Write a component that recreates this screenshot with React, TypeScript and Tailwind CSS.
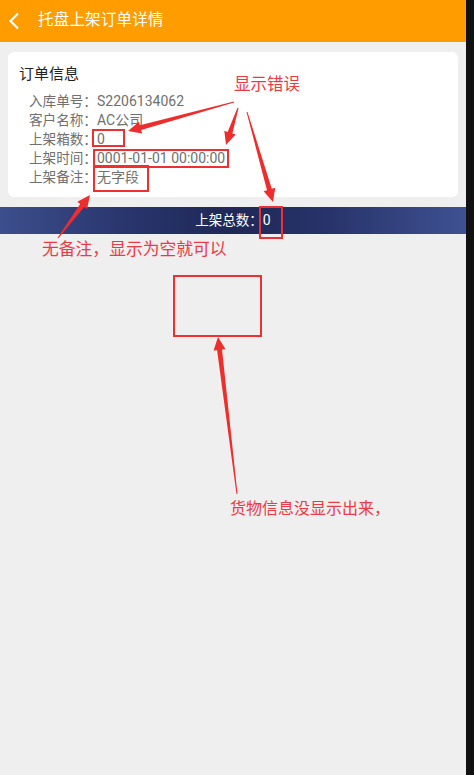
import React from "react";

type Pt = [number, number];

// tapered annotation arrow, thin at the tail and wide near the head
function arrowPoints(tail: Pt, tip: Pt, headLen = 13, headW = 12, w0 = 1, w1 = 5) {
  const [x1, y1] = tail;
  const [x2, y2] = tip;
  const L = Math.hypot(x2 - x1, y2 - y1);
  const dx = (x2 - x1) / L;
  const dy = (y2 - y1) / L;
  const nx = -dy;
  const ny = dx;
  const bx = x2 - dx * headLen;
  const by = y2 - dy * headLen;
  const p = (x: number, y: number, w: number) => `${(x + nx * w).toFixed(1)},${(y + ny * w).toFixed(1)}`;
  return [
    p(x1, y1, w0 / 2),
    p(bx, by, w1 / 2),
    p(bx, by, headW / 2),
    `${x2},${y2}`,
    p(bx, by, -headW / 2),
    p(bx, by, -w1 / 2),
    p(x1, y1, -w0 / 2),
  ].join(" ");
}

const arrows: [Pt, Pt][] = [
  [[234, 102], [128, 131]],
  [[238, 108], [226, 145]],
  [[247, 112], [273, 202]],
  [[58, 238], [90, 195]],
  [[237, 494], [218, 337]],
];

const boxes = [
  { x: 93, y: 130, w: 31, h: 16 },
  { x: 94, y: 150, w: 134, h: 17 },
  { x: 94, y: 166, w: 54, h: 25 },
  { x: 260, y: 207, w: 22, h: 31 },
  { x: 174, y: 276, w: 87, h: 60 },
];

const rows = [
  { label: "入库单号：", value: "S2206134062" },
  { label: "客户名称：", value: "AC公司" },
  { label: "上架箱数：", value: "0" },
  { label: "上架时间：", value: "0001-01-01 00:00:00" },
  { label: "上架备注：", value: "无字段" },
];

export default function App() {
  return (
    <div
      className="relative flex h-[775px] w-[474px] overflow-hidden"
      style={{ fontFamily: 'Roboto, "Noto Sans CJK SC", sans-serif' }}
    >
      <div className="flex w-[466px] flex-col bg-[#efefef]">
        <div className="flex h-[42px] items-center bg-[#ff9c00] text-white">
          <svg width="30" height="42" viewBox="0 0 30 42" className="shrink-0">
            <polyline points="18,13.5 10.5,21 18,28.5" fill="none" stroke="white" strokeWidth="2.2" />
          </svg>
          <span className="ml-[8px] whitespace-nowrap text-[15.5px] tracking-[0.2px]">托盘上架订单详情</span>
        </div>

        <div className="mx-[8px] mt-[10px] rounded-[6px] bg-white pb-[10px] pl-[11px] pt-[12px]">
          <div className="text-[15px] leading-[20px] text-[#222]">订单信息</div>
          <div className="mt-[8px] pl-[10px]">
            {rows.map((r) => (
              <div key={r.label} className="flex whitespace-nowrap text-[13.6px] leading-[19px] text-[#707070]">
                <span className="w-[68px] shrink-0">{r.label}</span>
                <span className="text-[14px]">{r.value}</span>
              </div>
            ))}
          </div>
        </div>

        <div className="mt-[10px] flex h-[27px] items-center justify-center whitespace-nowrap bg-[linear-gradient(90deg,#3c4e8c_0%,#27336a_30%,#1f2856_50%,#27336a_70%,#3f5192_100%)] text-[13.5px] text-white">
          上架总数：<span className="text-[14px]">0</span>
        </div>

        <div className="flex-1" />
      </div>
      <div className="flex-1 bg-[#111]" />

      {/* annotation layer */}
      <svg className="pointer-events-none absolute left-0 top-0" width="474" height="775">
        {boxes.map((b, i) => (
          <rect key={i} x={b.x} y={b.y} width={b.w} height={b.h} fill="none" stroke="#ee3030" strokeWidth="2" />
        ))}
        {arrows.map(([t, h], i) => (
          <polygon key={i} points={arrowPoints(t, h)} fill="#ee2d2d" />
        ))}
      </svg>
      <div className="absolute left-[234px] top-[74px] whitespace-nowrap text-[16.5px] leading-[22px] text-[#ec3a44]">显示错误</div>
      <div className="absolute left-[42px] top-[237px] whitespace-nowrap text-[16.8px] leading-[24px] text-[#ec3a44]">无备注，显示为空就可以</div>
      <div className="absolute left-[230px] top-[498px] whitespace-nowrap text-[16px] leading-[22px] text-[#ec3a44]">货物信息没显示出来，</div>
    </div>
  );
}
